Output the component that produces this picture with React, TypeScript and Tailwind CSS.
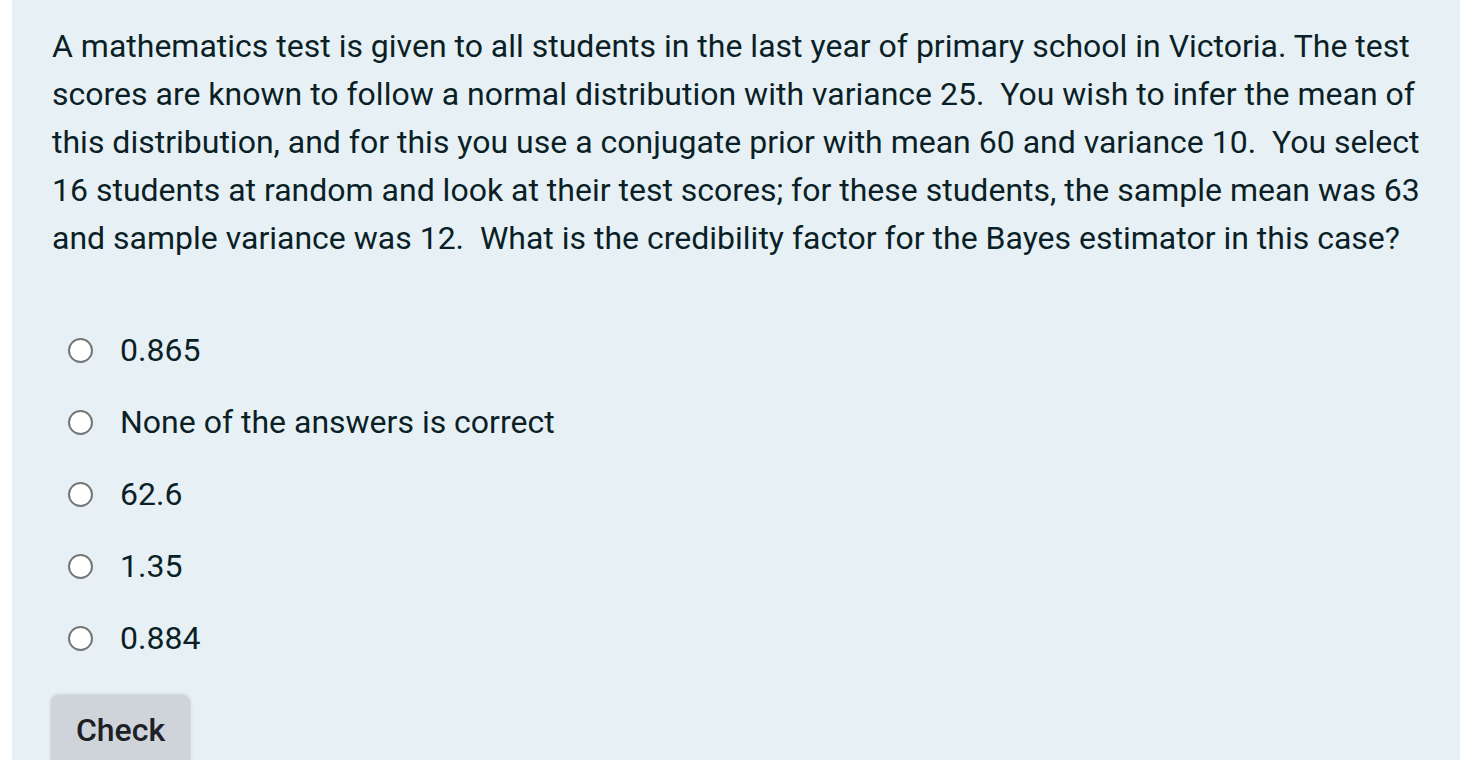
import React from 'react';

const options = ['0.865', 'None of the answers is correct', '62.6', '1.35', '0.884'];

export default function App() {
  return (
    <div className="min-h-[760px] bg-white pl-[12px] pr-[12px]" style={{ fontFamily: 'Roboto, "Liberation Sans", sans-serif' }}>
      <div className="min-h-[780px] bg-[#e7f1f5] pl-[40px] pr-[20px] pt-[22px] text-[#0b1f27]">
        {/* Question text */}
        <p className="whitespace-nowrap text-[32px] leading-[48px]">
          A mathematics test is given to all students in the last year of primary school in Victoria. The test
          <br />
          scores are known to follow a normal distribution with variance 25.{'\u00a0'} You wish to infer the mean of
          <br />
          this distribution, and for this you use a conjugate prior with mean 60 and variance 10.{'\u00a0'} You select
          <br />
          16 students at random and look at their test scores; for these students, the sample mean was 63
          <br />
          and sample variance was 12.{'\u00a0'} What is the credibility factor for the Bayes estimator in this case?
        </p>

        {/* Answers */}
        <div className="mt-[64px] flex flex-col gap-[24px]">
          {options.map((opt) => (
            <label key={opt} className="flex h-[48px] items-center text-[32px]">
              <span className="ml-[16px] mr-[27px] h-[25px] w-[25px] rounded-full border-[2px] border-[#767676] bg-white" />
              <span>{opt}</span>
            </label>
          ))}
        </div>

        <button className="mt-[33px] h-[80px] w-[137px] rounded-[6px] bg-[#ced4da] pb-[10px] text-[32px] font-medium text-[#1d2125] shadow-[0_1px_4px_rgba(0,0,0,0.3)]">
          Check
        </button>
      </div>
    </div>
  );
}
